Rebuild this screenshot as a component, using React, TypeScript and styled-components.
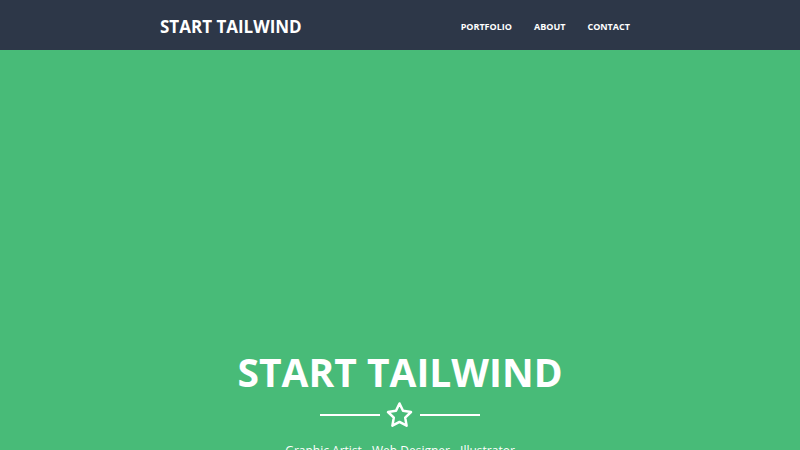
import React from "react";
import styled, { createGlobalStyle } from "styled-components";

const GlobalStyle = createGlobalStyle`
  *, *::before, *::after { box-sizing: border-box; }
  body {
    margin: 0;
    background: #48bb78;
    color: #fff;
    font-family: "Open Sans", "Noto Sans", sans-serif;
    overflow: hidden;
  }
`;

const Page = styled.div`
  height: 100vh;
  overflow: hidden;
`;

const Navbar = styled.nav`
  background: #2d3748;
  padding: 13px 20% 9px;
  display: flex;
  align-items: center;
  justify-content: space-between;
  font-weight: 700;
  text-transform: uppercase;
`;

const Brand = styled.a`
  color: #fff;
  font-size: 17px;
  line-height: 28px;
  text-decoration: none;
`;

const Menu = styled.ul`
  display: flex;
  gap: 22px;
  margin: 0;
  padding: 0 10px 0 0;
  list-style: none;
`;

const MenuLink = styled.a`
  display: block;
  color: #fff;
  font-size: 9px;
  line-height: 28px;
  text-decoration: none;
`;

const Masthead = styled.header`
  padding-top: 294px;
  display: flex;
  flex-direction: column;
  align-items: center;
  text-align: center;
`;

const Title = styled.h1`
  margin: 0;
  font-size: 39px;
  line-height: 56px;
  font-weight: 700;
  text-transform: uppercase;
`;

const Divider = styled.div`
  display: flex;
  align-items: center;
  gap: 6px;
  height: 30px;
`;

const Rule = styled.span`
  width: 60px;
  height: 2px;
  background: #fff;
`;

const Tagline = styled.p`
  margin: 11px 0 0;
  font-size: 12px;
  line-height: 20px;
`;

const links = ["Portfolio", "About", "Contact"];

export default function App() {
  return (
    <>
      <GlobalStyle />
      <Page>
        <Navbar>
          <Brand href="#">Start Tailwind</Brand>
          <Menu>
            {links.map((label) => (
              <li key={label}>
                <MenuLink href={`#${label.toLowerCase()}`}>{label}</MenuLink>
              </li>
            ))}
          </Menu>
        </Navbar>
        <Masthead>
          <Title>Start Tailwind</Title>
          <Divider>
            <Rule />
            <svg width="28" height="28" viewBox="0 0 28 28" fill="none" stroke="#fff" strokeWidth="2.5" strokeLinejoin="round" aria-hidden="true">
              <path d="M13.500 2.500l3.500 7.300 8 1.200-5.800 5.600 1.400 8.100-7.100-3.800-7.100 3.800 1.400-8.100L2 11l8-1.200z" />
            </svg>
            <Rule />
          </Divider>
          <Tagline>Graphic Artist - Web Designer - Illustrator</Tagline>
        </Masthead>
      </Page>
    </>
  );
}
